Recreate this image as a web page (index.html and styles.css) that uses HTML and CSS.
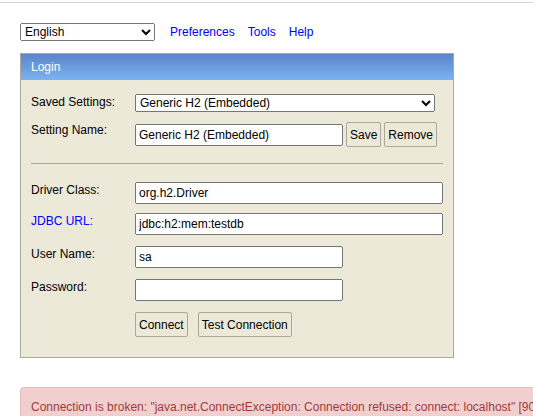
FILE: index.html
```html
<!DOCTYPE html>
<html lang="en">
<head>
  <meta charset="UTF-8" />
  <title>H2 Console</title>
  <link rel="stylesheet" href="styles.css">
</head>
<body>

<div class="top-line"></div>

<div class="toolbar">
  <select class="lang-select">
    <option>English</option>
    <option>Deutsch</option>
    <option>Français</option>
  </select>
  <a href="#" class="tool-link">Preferences</a>
  <a href="#" class="tool-link">Tools</a>
  <a href="#" class="tool-link">Help</a>
</div>

<div class="login-box">
  <div class="login-header">Login</div>

  <div class="login-body">
    <div class="form-row first">
      <label class="form-label">Saved Settings:</label>
      <div class="form-field">
        <select class="settings-select">
          <option>Generic H2 (Embedded)</option>
          <option>Generic H2 (Server)</option>
        </select>
      </div>
    </div>

    <div class="form-row row-name">
      <label class="form-label">Setting Name:</label>
      <div class="form-field">
        <input type="text" class="input-short" value="Generic H2 (Embedded)" />
        <button class="btn">Save</button>
        <button class="btn">Remove</button>
      </div>
    </div>

    <hr class="divider" />

    <!-- параметры подключения -->
    <div class="form-row row-driver">
      <label class="form-label">Driver Class:</label>
      <div class="form-field">
        <input type="text" class="input-long" value="org.h2.Driver" />
      </div>
    </div>

    <div class="form-row row-url">
      <a href="#" class="form-label label-link">JDBC URL:</a>
      <div class="form-field">
        <input type="text" class="input-long" value="jdbc:h2:mem:testdb" />
      </div>
    </div>

    <div class="form-row">
      <label class="form-label">User Name:</label>
      <div class="form-field">
        <input type="text" class="input-short" value="sa" />
      </div>
    </div>

    <div class="form-row">
      <label class="form-label">Password:</label>
      <div class="form-field">
        <input type="password" class="input-short" value="" />
      </div>
    </div>

    <div class="form-row">
      <span class="form-label"></span>
      <div class="form-field actions">
        <button class="btn">Connect</button>
        <button class="btn">Test Connection</button>
      </div>
    </div>
  </div>
</div>

<p class="error">Connection is broken: "java.net.ConnectException: Connection refused: connect: localhost" [90067-214] 90067/90067</p>

</body>
</html>
```

FILE: styles.css
```css
* {
  box-sizing: border-box;
}

html, body {
  overflow: hidden;
}

body {
  margin: 0;
  font-family: "Liberation Sans", Arial, sans-serif;
  font-size: 12px;
  background: white;
  color: black;
}

.top-line {
  margin-top: 2px;
  border-top: 1px solid #d3d3d3;
}

.toolbar {
  display: flex;
  align-items: center;
  margin-top: 20px;
  padding-left: 20px;
  height: 18px;
}

.lang-select {
  width: 135px;
  height: 18px;
  font-family: "Liberation Sans", Arial, sans-serif;
  font-size: 12px;
  margin: 0;
}

.tool-link {
  color: #0000ff;
  text-decoration: none;
  margin-left: 13px;
}

.lang-select + .tool-link {
  margin-left: 15px;
}

/* Блок логина */
.login-box {
  width: 434px;
  margin: 12px 0 0 20px;
  border: 1px solid #aca899;
  background: #ece9d8;
}

.login-header {
  height: 26px;
  line-height: 26px;
  padding-left: 10px;
  color: white;
  background: linear-gradient(#5a85c9, #7bb3f0);
}

.login-body {
  padding: 14px 10px 20px 10px;
}

.form-row {
  display: flex;
  align-items: flex-start;
  margin-top: 11px;
}

.form-row.first {
  margin-top: 0;
}

.row-name {
  margin-top: 10px;
}

.row-driver {
  margin-top: 18px;
}

.row-url {
  margin-top: 9px;
}

.form-label {
  width: 104px;
  flex: none;
  line-height: 14px;
  padding-top: 1px;
}

.label-link {
  color: #0000ff;
  text-decoration: none;
}

.form-field {
  display: flex;
  align-items: center;
  gap: 3px;
}

.form-field.actions {
  gap: 10px;
}

.settings-select {
  width: 300px;
  height: 18px;
  margin: 0;
  font-family: "Liberation Sans", Arial, sans-serif;
  font-size: 12px;
}

.form-field input {
  height: 22px;
  margin: 0;
  font-family: "Liberation Sans", Arial, sans-serif;
  font-size: 12px;
}

.input-short {
  width: 208px;
}

.input-long {
  width: 308px;
}

.btn {
  height: 25px;
  padding: 0 3px;
  margin: 0;
  background: #ece9d8;
  border: 1px solid #aca899;
  border-radius: 2px;
  font-family: "Liberation Sans", Arial, sans-serif;
  font-size: 12px;
  color: black;
  cursor: pointer;
}

.divider {
  margin: 16px 0 0 0;
  border: none;
  border-top: 1px solid #aca899;
  height: 0;
}

/* Ошибка */
.error {
  width: 760px;
  margin: 29px 0 0 20px;
  padding: 12px 10px;
  line-height: 14px;
  background: #f2cfcf;
  border: 1px solid #e8bcbc;
  border-radius: 4px;
  color: #a2393a;
  white-space: nowrap;
}
```
